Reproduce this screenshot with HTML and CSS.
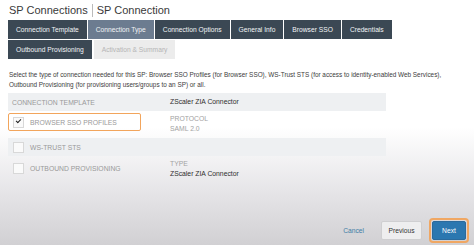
FILE: index.html
```html
<!DOCTYPE html>
<html lang="en">

<head>
    <meta charset="UTF-8">
    <meta name="viewport" content="width=device-width, initial-scale=1.0">
    <title>SP Connection</title>
    <link rel="stylesheet" href="styles.css">
</head>

<body>
    <div class="page">
        <h1 class="title">SP Connections <span class="sep"></span> SP Connection</h1>

        <div class="tabs">
            <div class="tab-row">
                <span class="tab">Connection Template</span>
                <span class="tab active">Connection Type</span>
                <span class="tab">Connection Options</span>
                <span class="tab">General Info</span>
                <span class="tab">Browser SSO</span>
                <span class="tab">Credentials</span>
            </div>
            <div class="tab-row">
                <span class="tab">Outbound Provisioning</span>
                <span class="tab disabled">Activation &amp; Summary</span>
            </div>
        </div>

        <p class="intro">Select the type of connection needed for this SP: Browser SSO Profiles (for Browser SSO), WS-Trust STS (for access to identity-enabled Web Services), Outbound Provisioning (for provisioning users/groups to an SP) or all.</p>

        <div class="types">
            <div class="row shaded">
                <div class="label">CONNECTION TEMPLATE</div>
                <div class="value">ZScaler ZIA Connector</div>
            </div>
            <div class="row protocol">
                <div class="label">
                    <label class="check focused"><span class="box checked"></span>BROWSER SSO PROFILES</label>
                </div>
                <div class="value">
                    <div class="key">PROTOCOL</div>
                    <div class="muted">SAML 2.0</div>
                </div>
            </div>
            <div class="row shaded">
                <div class="label">
                    <label class="check"><span class="box"></span>WS-TRUST STS</label>
                </div>
                <div class="value"></div>
            </div>
            <div class="row outbound">
                <div class="label">
                    <label class="check"><span class="box"></span>OUTBOUND PROVISIONING</label>
                </div>
                <div class="value">
                    <div class="key">TYPE</div>
                    <div>ZScaler ZIA Connector</div>
                </div>
            </div>
        </div>

        <div class="actions">
            <a class="cancel">Cancel</a>
            <button class="btn">Previous</button>
            <span class="next-wrap"><button class="btn primary">Next</button></span>
        </div>
    </div>
</body>

</html>
```

FILE: styles.css
```css
html,
body {
    margin: 0;
    height: 100%;
}

body {
    font-family: "Liberation Sans", Arial, sans-serif;
    color: #333;
    background: linear-gradient(to bottom, #ffffff 0%, #ffffff 52%, #e6e5e8 78%, #d1d0d3 100%);
}

.page {
    height: 100vh;
    box-sizing: border-box;
    padding: 0 5px 2px 8px;
    display: flex;
    flex-direction: column;
}

.title {
    margin: 0;
    padding: 2px 0 0 1px;
    height: 18px;
    box-sizing: border-box;
    font-size: 11px;
    font-weight: normal;
    color: #3a3a3a;
    display: flex;
    align-items: center;
    gap: 4px;
    line-height: 14px;
}

.sep {
    display: inline-block;
    width: 1px;
    height: 13px;
    background: #bbb;
}

.tabs {
    margin-top: 2px;
}

.tab-row {
    display: flex;
    gap: 1px;
    margin-bottom: 1px;
}

.tab {
    height: 19px;
    line-height: 19px;
    padding: 0 8px;
    background: #3b4854;
    color: #f2f4f6;
    font-size: 6.7px;
    white-space: nowrap;
}

.tab.active {
    background: #6c7c90;
}

.tab.disabled {
    background: #ececec;
    color: #b5b5b5;
    margin-left: 1px;
}

.intro {
    margin: 10px 0 0 1px;
    font-size: 6.4px;
    line-height: 10px;
    color: #3c3c3c;
    width: 455px;
}

.types {
    width: 378px;
    margin-top: 3px;
    font-size: 6.8px;
}

.row {
    display: flex;
    align-items: center;
    min-height: 18px;
}

.row.shaded {
    background: #eef0f2;
}

.row + .row {
    margin-top: 2px;
}

.label {
    width: 162px;
    color: #999;
    padding-left: 4px;
    box-sizing: border-box;
}

.row .label:has(.check) {
    padding-left: 0;
}

.value {
    flex: 1;
    color: #2e2e2e;
    line-height: 10px;
}

.key,
.muted {
    color: #a2a2a2;
}

.check {
    display: flex;
    align-items: center;
    gap: 6px;
    width: 133px;
    height: 18px;
    box-sizing: border-box;
    padding-left: 4px;
    color: #999;
    border: 1px solid transparent;
    border-radius: 2px;
}

.check.focused {
    border-color: #f2a55c;
}

.box {
    width: 9px;
    height: 9px;
    border: 1px solid #d8d8d8;
    background: #fafafa;
    position: relative;
}

.box.checked::after {
    content: "";
    position: absolute;
    left: 2px;
    top: 1px;
    width: 4px;
    height: 2px;
    border-left: 1.5px solid #222;
    border-bottom: 1.5px solid #222;
    transform: rotate(-45deg);
}

.row.protocol {
    min-height: 23px;
    align-items: flex-start;
}

.row.protocol .value {
    padding-top: 1px;
}

.row.outbound {
    min-height: 22px;
    align-items: flex-start;
    padding-top: 1px;
}

.actions {
    margin-top: auto;
    display: flex;
    justify-content: flex-end;
    align-items: center;
    font-size: 6.7px;
}

.cancel {
    color: #3f7ea6;
    margin-right: 17px;
}

.btn {
    font-family: inherit;
    font-size: 6.7px;
    height: 19px;
    border-radius: 2px;
    cursor: pointer;
}

.btn:not(.primary) {
    width: 41px;
    background: #eeeeef;
    border: 1px solid #cfcfd1;
    color: #333;
    margin-right: 7px;
}

.next-wrap {
    border: 2px solid #f0a763;
    border-radius: 4px;
    padding: 1px;
    display: flex;
}

.btn.primary {
    width: 34px;
    background: #2b77b0;
    border: 1px solid #2b6a9c;
    color: #fff;
}
```
